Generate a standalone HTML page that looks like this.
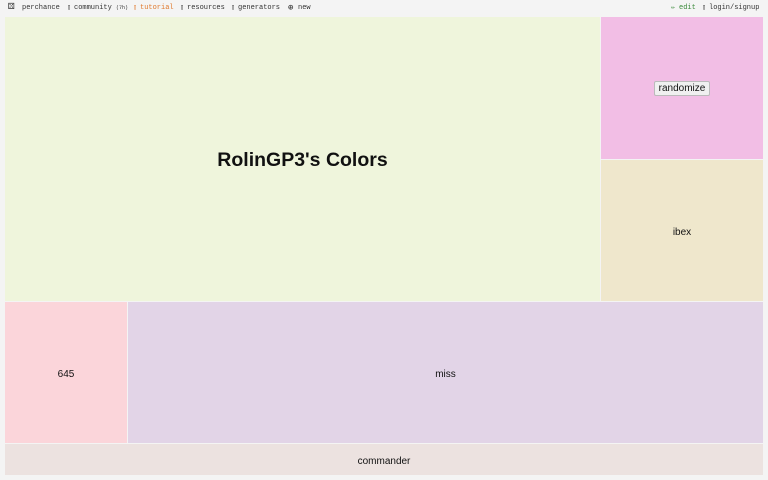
<!DOCTYPE html>
<html><head><meta charset="utf-8"><style>
html,body{margin:0;padding:0;width:768px;height:480px;background:#f4f4f4;overflow:hidden;font-family:"Liberation Sans",sans-serif}
.bar{position:absolute;top:0;left:0;width:768px;height:16px;font-family:"Liberation Mono",monospace;font-size:7px;color:#333;line-height:17px}
.bar span{position:absolute;top:0;white-space:nowrap}
.b{position:absolute;display:flex;align-items:center;justify-content:center;font-size:10px;color:#111;padding-top:3px;box-sizing:border-box}
button{font-family:"Liberation Sans",sans-serif;font-size:10px;padding:1px 4px;background:#f0f0f0;border:1px solid #bbb;border-radius:2px;color:#111}
</style></head><body>
<div class="bar">
<span style="left:8px;font-size:11px;line-height:15px">⚄</span>
<span style="left:22px">perchance</span>
<span style="left:67px">▯</span><span style="left:74px">community</span><span style="left:116px;font-size:5px">(7h)</span>
<span style="left:133px;color:#e07a2e">▯</span><span style="left:140px;color:#e07a2e">tutorial</span>
<span style="left:180px">▯</span><span style="left:187px">resources</span>
<span style="left:231px">▯</span><span style="left:238px">generators</span>
<span style="left:288px;font-size:9px;line-height:16px">⊕</span><span style="left:298px">new</span>
<span style="left:671px;color:#3a8a3a">✏</span><span style="left:679px;color:#3a8a3a">edit</span>
<span style="left:702px">▯</span><span style="left:709px">login/signup</span>
</div>
<div class="b" style="left:5px;top:17px;width:595px;height:284px;background:#eff5dc;font-size:19.5px;font-weight:bold;padding-top:2px">RolinGP3's Colors</div>
<div class="b" style="left:601px;top:17px;width:162px;height:142px;background:#f2bee5;padding-top:0"><button>randomize</button></div>
<div class="b" style="left:601px;top:160px;width:162px;height:141px;background:#efe7cc">ibex</div>
<div class="b" style="left:5px;top:302px;width:122px;height:141px;background:#fbd5da">645</div>
<div class="b" style="left:128px;top:302px;width:635px;height:141px;background:#e2d4e7">miss</div>
<div class="b" style="left:5px;top:444px;width:758px;height:31px;background:#ece2e0">commander</div>
</body></html>
